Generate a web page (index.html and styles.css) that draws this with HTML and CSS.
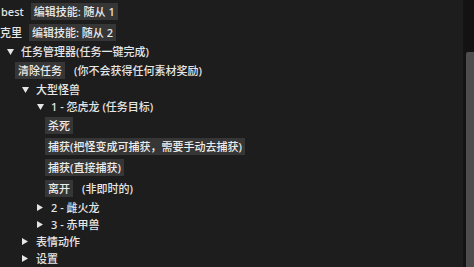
FILE: index.html
```html
<!DOCTYPE html>
<html lang="zh-CN">
<head>
<meta charset="utf-8">
<link rel="stylesheet" href="styles.css">
</head>
<body>
<div class="window">
  <div class="content">
    <div class="row"><span class="label best">best</span><span class="btn">编辑技能: 随从 1</span></div>
    <div class="row"><span class="label keli">克里</span><span class="btn">编辑技能: 随从 2</span></div>
    <div class="node"><span class="arrow"><svg width="7" height="6" viewBox="0 0 7 6"><polygon points="0,0 7,0 3.5,6"/></svg></span><span>任务管理器(任务一键完成)</span></div>
    <div class="children">
      <div class="row"><span class="btn">清除任务</span><span class="note">(你不会获得任何素材奖励)</span></div>
      <div class="node"><span class="arrow"><svg width="7" height="6" viewBox="0 0 7 6"><polygon points="0,0 7,0 3.5,6"/></svg></span><span>大型怪兽</span></div>
      <div class="children">
        <div class="node"><span class="arrow"><svg width="7" height="6" viewBox="0 0 7 6"><polygon points="0,0 7,0 3.5,6"/></svg></span><span>1 - 怨虎龙 (任务目标)</span></div>
        <div class="children">
          <div class="row"><span class="btn">杀死</span></div>
          <div class="row"><span class="btn">捕获(把怪变成可捕获，需要手动去捕获)</span></div>
          <div class="row"><span class="btn">捕获(直接捕获)</span></div>
          <div class="row"><span class="btn">离开</span><span class="note">(非即时的)</span></div>
        </div>
        <div class="node"><span class="arrow"><svg width="6" height="7" viewBox="0 0 6 7"><polygon points="0,0 6,3.5 0,7"/></svg></span><span>2 - 雌火龙</span></div>
        <div class="node"><span class="arrow"><svg width="6" height="7" viewBox="0 0 6 7"><polygon points="0,0 6,3.5 0,7"/></svg></span><span>3 - 赤甲兽</span></div>
      </div>
      <div class="node"><span class="arrow"><svg width="6" height="7" viewBox="0 0 6 7"><polygon points="0,0 6,3.5 0,7"/></svg></span><span>表情动作</span></div>
      <div class="node"><span class="arrow"><svg width="6" height="7" viewBox="0 0 6 7"><polygon points="0,0 6,3.5 0,7"/></svg></span><span>设置</span></div>
    </div>
  </div>
  <div class="scrollbar"><div class="thumb"></div></div>
</div>
</body>
</html>
```
FILE: styles.css
```css
html, body {
  margin: 0;
  padding: 0;
  background: #1d1d1d;
}
body {
  font-family: "Noto Sans", "Noto Sans CJK SC", sans-serif;
  font-size: 11px;
  font-weight: 500;
  line-height: 13px;
  color: #e6e6e6;
  overflow: hidden;
}
.window {
  display: flex;
  width: 474px;
  height: 267px;
  overflow: hidden;
}
.content {
  flex: 1;
  display: flex;
  flex-direction: column;
  gap: 4px;
  padding-top: 3px;
  white-space: nowrap;
}
.children {
  display: flex;
  flex-direction: column;
  gap: 4px;
  padding-left: 15px;
}
.row {
  display: flex;
  align-items: center;
  gap: 9px;
  height: 17px;
}
.label.best { margin-left: 1px; margin-right: -2px; }
.label.keli { margin-left: 0; margin-right: -2px; }
.btn {
  background: #363636;
  padding: 2px 3px;
  line-height: 13px;
  color: #ebebeb;
}
.node {
  display: flex;
  align-items: center;
  height: 13px;
}
.arrow {
  width: 21px;
  display: flex;
  align-items: center;
  justify-content: center;
  padding-right: 1px;
  box-sizing: border-box;
  flex: none;
}
.arrow svg {
  fill: #e6e6e6;
  display: block;
}
.scrollbar {
  width: 11px;
  height: 267px;
  background: #131313;
  display: flex;
  flex-direction: column;
  padding-top: 52px;
  padding-left: 3px;
  box-sizing: border-box;
}
.thumb {
  flex: 1;
  background: #4e4e4e;
  border-radius: 2px 0 0 0;
}
```
